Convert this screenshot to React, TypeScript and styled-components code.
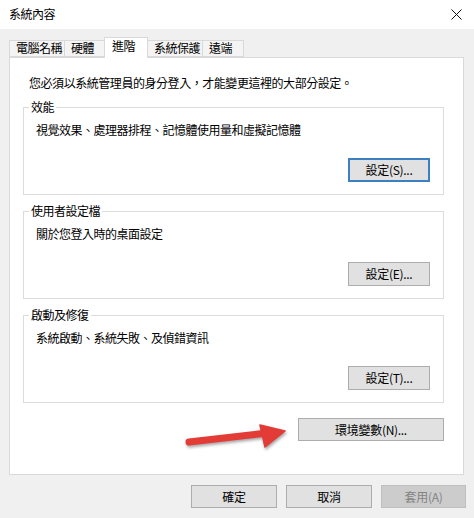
import React from "react";
import styled, { createGlobalStyle } from "styled-components";

const GlobalStyle = createGlobalStyle`
  html, body { margin: 0; padding: 0; background: #f0f0f0; }
  body {
    font-family: "Noto Sans CJK TC", "Noto Sans", "Liberation Sans", sans-serif;
    font-size: 12px;
    color: #000;
  }
`;

const Window = styled.div`
  position: relative;
  width: 474px;
  height: 518px;
  display: flex;
  flex-direction: column;
  background: #f0f0f0;
  overflow: hidden;
`;

const TitleBar = styled.div`
  height: 29px;
  flex: none;
  display: flex;
  align-items: center;
  justify-content: space-between;
  padding: 0 12px 0 9px;
  background: #ffffff;
`;

const Title = styled.span`
  font-size: 12px;
  letter-spacing: -0.5px;
  line-height: 14px;
  margin-top: -1px;
`;

const Content = styled.div`
  display: flex;
  flex-direction: column;
  padding: 8px 8px 0 9px;
`;

const TabStrip = styled.div`
  display: flex;
  align-items: flex-end;
  height: 20px;
  position: relative;
  z-index: 1;
`;

const Tab = styled.div<{ $active?: boolean; $w: number }>`
  box-sizing: border-box;
  width: ${(p) => p.$w}px;
  height: ${(p) => (p.$active ? 21 : 17)}px;
  margin-bottom: ${(p) => (p.$active ? -1 : 0)}px;
  margin-left: -1px;
  padding: ${(p) => (p.$active ? "1px 0 0 7px" : "0 0 0 6px")};
  border: 1px solid #d9d9d9;
  border-bottom: ${(p) => (p.$active ? "none" : "1px solid #d9d9d9")};
  background: ${(p) => (p.$active ? "#ffffff" : "#f4f4f4")};
  font-size: 12px;
  letter-spacing: -0.5px;
  line-height: 14px;
  white-space: nowrap;
  position: relative;
  z-index: ${(p) => (p.$active ? 2 : 1)};
  &:first-child { margin-left: 0; }
`;

const Panel = styled.div`
  box-sizing: border-box;
  width: 455px;
  height: 418px;
  display: flex;
  flex-direction: column;
  padding: 17px 19px 0 13px;
  background: #ffffff;
  border: 1px solid #d9d9d9;
`;

const Intro = styled.p`
  margin: 0 0 0 6px;
  font-size: 12px;
  letter-spacing: -0.45px;
  line-height: 16px;
`;

const Group = styled.fieldset`
  margin: 9px 0 0 0;
  padding: 0 13px 12px 12px;
  border: 1px solid #dcdcdc;
  min-width: 0;
  display: flex;
  flex-direction: column;
`;

const Legend = styled.legend`
  margin-left: -7px;
  padding: 0 2px;
  font-size: 12px;
  letter-spacing: -0.5px;
  line-height: 14px;
`;

const Description = styled.div`
  margin-top: 8px;
  font-size: 12px;
  letter-spacing: -0.5px;
  line-height: 16px;
`;

const ButtonRow = styled.div<{ $top: number; $gap?: number }>`
  display: flex;
  justify-content: flex-end;
  gap: ${(p) => p.$gap ?? 0}px;
  margin-top: ${(p) => p.$top}px;
`;

const Button = styled.button<{ $w: number; $h?: number; $focused?: boolean }>`
  box-sizing: border-box;
  width: ${(p) => p.$w}px;
  height: ${(p) => p.$h ?? 23}px;
  padding: 0;
  background: #e1e1e1;
  border: ${(p) => (p.$focused ? "2px solid #3d7fc1" : "1px solid #adadad")};
  border-radius: 0;
  font-family: inherit;
  font-size: 12px;
  letter-spacing: -0.3px;
  line-height: 14px;
  color: #000;
  &:disabled {
    background: #cccccc;
    border-color: #bfbfbf;
    color: #838383;
  }
`;

const Footer = styled.div`
  display: flex;
  justify-content: flex-end;
  gap: 9px;
  margin-top: 10px;
`;

const Annotation = styled.svg`
  position: absolute;
  left: 182px;
  top: 416px;
  width: 110px;
  height: 38px;
  overflow: visible;
  pointer-events: none;
  filter: drop-shadow(1px 2px 1.5px rgba(0, 0, 0, 0.35));
`;

const CloseIcon = () => (
  <svg width="11" height="11" viewBox="0 0 11 11" style={{ marginTop: -1 }}>
    <path d="M0.5 0.5 L10.5 10.5 M10.5 0.5 L0.5 10.5" stroke="#111" strokeWidth="1" fill="none" />
  </svg>
);

const tabs = [
  { label: "電腦名稱", w: 56 },
  { label: "硬體", w: 41 },
  { label: "進階", w: 44, active: true },
  { label: "系統保護", w: 56 },
  { label: "遠端", w: 42 },
];

const groups = [
  { legend: "效能", text: "視覺效果、處理器排程、記憶體使用量和虛擬記憶體", btn: "設定(S)...", focused: true },
  { legend: "使用者設定檔", text: "關於您登入時的桌面設定", btn: "設定(E)..." },
  { legend: "啟動及修復", text: "系統啟動、系統失敗、及偵錯資訊", btn: "設定(T)..." },
];

export default function App() {
  return (
    <>
      <GlobalStyle />
      <Window>
        <TitleBar>
          <Title>系統內容</Title>
          <CloseIcon />
        </TitleBar>
        <Content>
          <TabStrip>
            {tabs.map((t) => (
              <Tab key={t.label} $w={t.w} $active={t.active}>
                {t.label}
              </Tab>
            ))}
          </TabStrip>
          <Panel>
            <Intro>您必須以系統管理員的身分登入，才能變更這裡的大部分設定。</Intro>
            {groups.map((g) => (
              <Group key={g.legend}>
                <Legend>{g.legend}</Legend>
                <Description>{g.text}</Description>
                <ButtonRow $top={20}>
                  <Button $w={82} $h={24} $focused={g.focused}>
                    {g.btn}
                  </Button>
                </ButtonRow>
              </Group>
            ))}
            <ButtonRow $top={15}>
              <Button $w={146}>環境變數(N)...</Button>
            </ButtonRow>
          </Panel>
          <Footer>
            <Button $w={86}>確定</Button>
            <Button $w={86}>取消</Button>
            <Button $w={85} disabled>
              套用(A)
            </Button>
          </Footer>
        </Content>
        <Annotation viewBox="0 0 110 38">
          <path d="M7 26 L81 17.5" stroke="#e33b36" strokeWidth="7" strokeLinecap="round" fill="none" />
          <path d="M78 9 L103 15 L83 31 Z" fill="#e33b36" stroke="#e33b36" strokeWidth="1.5" strokeLinejoin="round" />
        </Annotation>
      </Window>
    </>
  );
}
